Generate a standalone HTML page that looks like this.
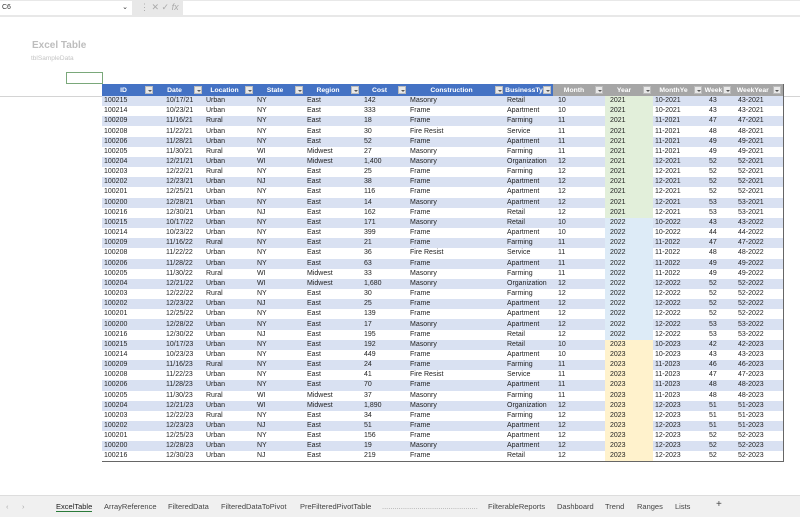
<!DOCTYPE html>
<html><head><meta charset="utf-8">
<style>
*{margin:0;padding:0;box-sizing:border-box}
body{width:800px;height:517px;overflow:hidden;background:#fff;font-family:"Liberation Sans",Arial,sans-serif;position:relative}
.top{position:absolute;left:0;top:0;width:800px;height:17px;background:#e8e8e8}
.nb{position:absolute;left:0;top:1px;width:132px;height:14px;background:#fff;font-size:7px;padding:3px 2px;color:#333}
.nb span{position:absolute;right:4px;top:2px;font-size:7px}
.fx{position:absolute;left:140px;top:2px;font-size:9px;color:#aaa}
.fb{position:absolute;left:183px;top:1px;width:617px;height:14px;background:#fff}
.t1{position:absolute;left:32px;top:40px;font-size:10px;font-weight:bold;color:#bdbdbd}
.t2{position:absolute;left:31px;top:55px;font-size:6.5px;color:#c4c4c4}
.sel{position:absolute;left:66px;top:72px;width:37px;height:12px;border:1px solid #7aa87a}
.hl{position:absolute;top:96px;height:1px;background:#d4d4d4}
table{position:absolute;left:102px;top:84px;border-collapse:collapse;table-layout:fixed;width:681px;font-size:7px;color:#222}
td{height:10.17px;line-height:10px;white-space:nowrap;overflow:hidden;padding:0 0 0 2px}
tr:nth-child(even) td{background:#d9e1f2}
th{height:12px;background:#4472c4;color:#fff;font-size:6.8px;font-weight:bold;position:relative;text-align:center;padding-right:10px;white-space:nowrap;overflow:hidden}
th.g{background:#a6a6a6}
th i{position:absolute;right:2px;top:2px;width:8px;height:8px;background:#e8e8e8;border:1px solid #bbb}
th i:after{content:"";position:absolute;left:1.5px;top:2.5px;border:2px solid transparent;border-top:2.5px solid #555}
td:nth-child(2){padding-left:11px}
td:nth-child(6){padding-left:3px}
td:nth-child(9){padding-left:5px}
td:nth-child(10){padding-left:5px}
td:nth-child(12){padding-left:5px}
td:nth-child(13){padding-left:5px}
td.a{background:#e2efda!important}td.b{background:#ddebf7!important}td.c{background:#fff2cc!important}
table{border-bottom:1px solid #666;border-right:1px solid #666}
.tabs{position:absolute;left:0;top:495px;width:800px;height:22px;background:#f0f0f0;border-top:1px solid #ddd;font-size:7.5px;color:#444}
.tabs span{position:absolute;top:6px}
</style></head><body>
<div class="top"><div class="nb">C6<span>⌄</span></div><div class="fx">⋮ ✕ ✓ <i>fx</i></div><div class="fb"></div></div>
<div class="t1">Excel Table</div><div class="t2">tblSampleData</div>
<div class="sel"></div>
<div class="hl" style="left:0;width:102px"></div><div class="hl" style="left:783px;width:17px"></div>
<table>
<colgroup><col style="width:53px"><col style="width:49px"><col style="width:51px"><col style="width:50px"><col style="width:56px"><col style="width:47px"><col style="width:97px"><col style="width:48px"><col style="width:52px"><col style="width:48px"><col style="width:51px"><col style="width:29px"><col style="width:50px"></colgroup>
<tr><th>ID<i></i></th><th>Date<i></i></th><th>Location<i></i></th><th>State<i></i></th><th>Region<i></i></th><th>Cost<i></i></th><th>Construction<i></i></th><th>BusinessTy<i></i></th><th class="g">Month<i></i></th><th class="g">Year<i></i></th><th class="g">MonthYe<i></i></th><th class="g">Week<i></i></th><th class="g">WeekYear<i></i></th></tr>
<tr><td>100215</td><td>10/17/21</td><td>Urban</td><td>NY</td><td>East</td><td>142</td><td>Masonry</td><td>Retail</td><td>10</td><td class="a">2021</td><td>10-2021</td><td>43</td><td>43-2021</td></tr>
<tr><td>100214</td><td>10/23/21</td><td>Urban</td><td>NY</td><td>East</td><td>333</td><td>Frame</td><td>Apartment</td><td>10</td><td class="a">2021</td><td>10-2021</td><td>43</td><td>43-2021</td></tr>
<tr><td>100209</td><td>11/16/21</td><td>Rural</td><td>NY</td><td>East</td><td>18</td><td>Frame</td><td>Farming</td><td>11</td><td class="a">2021</td><td>11-2021</td><td>47</td><td>47-2021</td></tr>
<tr><td>100208</td><td>11/22/21</td><td>Urban</td><td>NY</td><td>East</td><td>30</td><td>Fire Resist</td><td>Service</td><td>11</td><td class="a">2021</td><td>11-2021</td><td>48</td><td>48-2021</td></tr>
<tr><td>100206</td><td>11/28/21</td><td>Urban</td><td>NY</td><td>East</td><td>52</td><td>Frame</td><td>Apartment</td><td>11</td><td class="a">2021</td><td>11-2021</td><td>49</td><td>49-2021</td></tr>
<tr><td>100205</td><td>11/30/21</td><td>Rural</td><td>WI</td><td>Midwest</td><td>27</td><td>Masonry</td><td>Farming</td><td>11</td><td class="a">2021</td><td>11-2021</td><td>49</td><td>49-2021</td></tr>
<tr><td>100204</td><td>12/21/21</td><td>Urban</td><td>WI</td><td>Midwest</td><td>1,400</td><td>Masonry</td><td>Organization</td><td>12</td><td class="a">2021</td><td>12-2021</td><td>52</td><td>52-2021</td></tr>
<tr><td>100203</td><td>12/22/21</td><td>Rural</td><td>NY</td><td>East</td><td>25</td><td>Frame</td><td>Farming</td><td>12</td><td class="a">2021</td><td>12-2021</td><td>52</td><td>52-2021</td></tr>
<tr><td>100202</td><td>12/23/21</td><td>Urban</td><td>NJ</td><td>East</td><td>38</td><td>Frame</td><td>Apartment</td><td>12</td><td class="a">2021</td><td>12-2021</td><td>52</td><td>52-2021</td></tr>
<tr><td>100201</td><td>12/25/21</td><td>Urban</td><td>NY</td><td>East</td><td>116</td><td>Frame</td><td>Apartment</td><td>12</td><td class="a">2021</td><td>12-2021</td><td>52</td><td>52-2021</td></tr>
<tr><td>100200</td><td>12/28/21</td><td>Urban</td><td>NY</td><td>East</td><td>14</td><td>Masonry</td><td>Apartment</td><td>12</td><td class="a">2021</td><td>12-2021</td><td>53</td><td>53-2021</td></tr>
<tr><td>100216</td><td>12/30/21</td><td>Urban</td><td>NJ</td><td>East</td><td>162</td><td>Frame</td><td>Retail</td><td>12</td><td class="a">2021</td><td>12-2021</td><td>53</td><td>53-2021</td></tr>
<tr><td>100215</td><td>10/17/22</td><td>Urban</td><td>NY</td><td>East</td><td>171</td><td>Masonry</td><td>Retail</td><td>10</td><td class="b">2022</td><td>10-2022</td><td>43</td><td>43-2022</td></tr>
<tr><td>100214</td><td>10/23/22</td><td>Urban</td><td>NY</td><td>East</td><td>399</td><td>Frame</td><td>Apartment</td><td>10</td><td class="b">2022</td><td>10-2022</td><td>44</td><td>44-2022</td></tr>
<tr><td>100209</td><td>11/16/22</td><td>Rural</td><td>NY</td><td>East</td><td>21</td><td>Frame</td><td>Farming</td><td>11</td><td class="b">2022</td><td>11-2022</td><td>47</td><td>47-2022</td></tr>
<tr><td>100208</td><td>11/22/22</td><td>Urban</td><td>NY</td><td>East</td><td>36</td><td>Fire Resist</td><td>Service</td><td>11</td><td class="b">2022</td><td>11-2022</td><td>48</td><td>48-2022</td></tr>
<tr><td>100206</td><td>11/28/22</td><td>Urban</td><td>NY</td><td>East</td><td>63</td><td>Frame</td><td>Apartment</td><td>11</td><td class="b">2022</td><td>11-2022</td><td>49</td><td>49-2022</td></tr>
<tr><td>100205</td><td>11/30/22</td><td>Rural</td><td>WI</td><td>Midwest</td><td>33</td><td>Masonry</td><td>Farming</td><td>11</td><td class="b">2022</td><td>11-2022</td><td>49</td><td>49-2022</td></tr>
<tr><td>100204</td><td>12/21/22</td><td>Urban</td><td>WI</td><td>Midwest</td><td>1,680</td><td>Masonry</td><td>Organization</td><td>12</td><td class="b">2022</td><td>12-2022</td><td>52</td><td>52-2022</td></tr>
<tr><td>100203</td><td>12/22/22</td><td>Rural</td><td>NY</td><td>East</td><td>30</td><td>Frame</td><td>Farming</td><td>12</td><td class="b">2022</td><td>12-2022</td><td>52</td><td>52-2022</td></tr>
<tr><td>100202</td><td>12/23/22</td><td>Urban</td><td>NJ</td><td>East</td><td>25</td><td>Frame</td><td>Apartment</td><td>12</td><td class="b">2022</td><td>12-2022</td><td>52</td><td>52-2022</td></tr>
<tr><td>100201</td><td>12/25/22</td><td>Urban</td><td>NY</td><td>East</td><td>139</td><td>Frame</td><td>Apartment</td><td>12</td><td class="b">2022</td><td>12-2022</td><td>52</td><td>52-2022</td></tr>
<tr><td>100200</td><td>12/28/22</td><td>Urban</td><td>NY</td><td>East</td><td>17</td><td>Masonry</td><td>Apartment</td><td>12</td><td class="b">2022</td><td>12-2022</td><td>53</td><td>53-2022</td></tr>
<tr><td>100216</td><td>12/30/22</td><td>Urban</td><td>NJ</td><td>East</td><td>195</td><td>Frame</td><td>Retail</td><td>12</td><td class="b">2022</td><td>12-2022</td><td>53</td><td>53-2022</td></tr>
<tr><td>100215</td><td>10/17/23</td><td>Urban</td><td>NY</td><td>East</td><td>192</td><td>Masonry</td><td>Retail</td><td>10</td><td class="c">2023</td><td>10-2023</td><td>42</td><td>42-2023</td></tr>
<tr><td>100214</td><td>10/23/23</td><td>Urban</td><td>NY</td><td>East</td><td>449</td><td>Frame</td><td>Apartment</td><td>10</td><td class="c">2023</td><td>10-2023</td><td>43</td><td>43-2023</td></tr>
<tr><td>100209</td><td>11/16/23</td><td>Rural</td><td>NY</td><td>East</td><td>24</td><td>Frame</td><td>Farming</td><td>11</td><td class="c">2023</td><td>11-2023</td><td>46</td><td>46-2023</td></tr>
<tr><td>100208</td><td>11/22/23</td><td>Urban</td><td>NY</td><td>East</td><td>41</td><td>Fire Resist</td><td>Service</td><td>11</td><td class="c">2023</td><td>11-2023</td><td>47</td><td>47-2023</td></tr>
<tr><td>100206</td><td>11/28/23</td><td>Urban</td><td>NY</td><td>East</td><td>70</td><td>Frame</td><td>Apartment</td><td>11</td><td class="c">2023</td><td>11-2023</td><td>48</td><td>48-2023</td></tr>
<tr><td>100205</td><td>11/30/23</td><td>Rural</td><td>WI</td><td>Midwest</td><td>37</td><td>Masonry</td><td>Farming</td><td>11</td><td class="c">2023</td><td>11-2023</td><td>48</td><td>48-2023</td></tr>
<tr><td>100204</td><td>12/21/23</td><td>Urban</td><td>WI</td><td>Midwest</td><td>1,890</td><td>Masonry</td><td>Organization</td><td>12</td><td class="c">2023</td><td>12-2023</td><td>51</td><td>51-2023</td></tr>
<tr><td>100203</td><td>12/22/23</td><td>Rural</td><td>NY</td><td>East</td><td>34</td><td>Frame</td><td>Farming</td><td>12</td><td class="c">2023</td><td>12-2023</td><td>51</td><td>51-2023</td></tr>
<tr><td>100202</td><td>12/23/23</td><td>Urban</td><td>NJ</td><td>East</td><td>51</td><td>Frame</td><td>Apartment</td><td>12</td><td class="c">2023</td><td>12-2023</td><td>51</td><td>51-2023</td></tr>
<tr><td>100201</td><td>12/25/23</td><td>Urban</td><td>NY</td><td>East</td><td>156</td><td>Frame</td><td>Apartment</td><td>12</td><td class="c">2023</td><td>12-2023</td><td>52</td><td>52-2023</td></tr>
<tr><td>100200</td><td>12/28/23</td><td>Urban</td><td>NY</td><td>East</td><td>19</td><td>Masonry</td><td>Apartment</td><td>12</td><td class="c">2023</td><td>12-2023</td><td>52</td><td>52-2023</td></tr>
<tr><td>100216</td><td>12/30/23</td><td>Urban</td><td>NJ</td><td>East</td><td>219</td><td>Frame</td><td>Retail</td><td>12</td><td class="c">2023</td><td>12-2023</td><td>52</td><td>52-2023</td></tr>
</table>
<div class="tabs">
<span style="left:6px;color:#aaa">‹</span><span style="left:22px;color:#aaa">›</span>
<span style="left:56px;color:#222;border-bottom:1.5px solid #2a7a3a">ExcelTable</span>
<span style="left:104px">ArrayReference</span>
<span style="left:168px">FilteredData</span>
<span style="left:221px">FilteredDataToPivot</span>
<span style="left:300px">PreFilteredPivotTable</span>
<span style="left:382px;color:#999">..............................................</span>
<span style="left:488px">FilterableReports</span>
<span style="left:557px">Dashboard</span>
<span style="left:605px">Trend</span>
<span style="left:637px">Ranges</span>
<span style="left:675px">Lists</span>
<span style="left:716px;font-size:10px;top:3px">+</span>
</div>
</body></html>
